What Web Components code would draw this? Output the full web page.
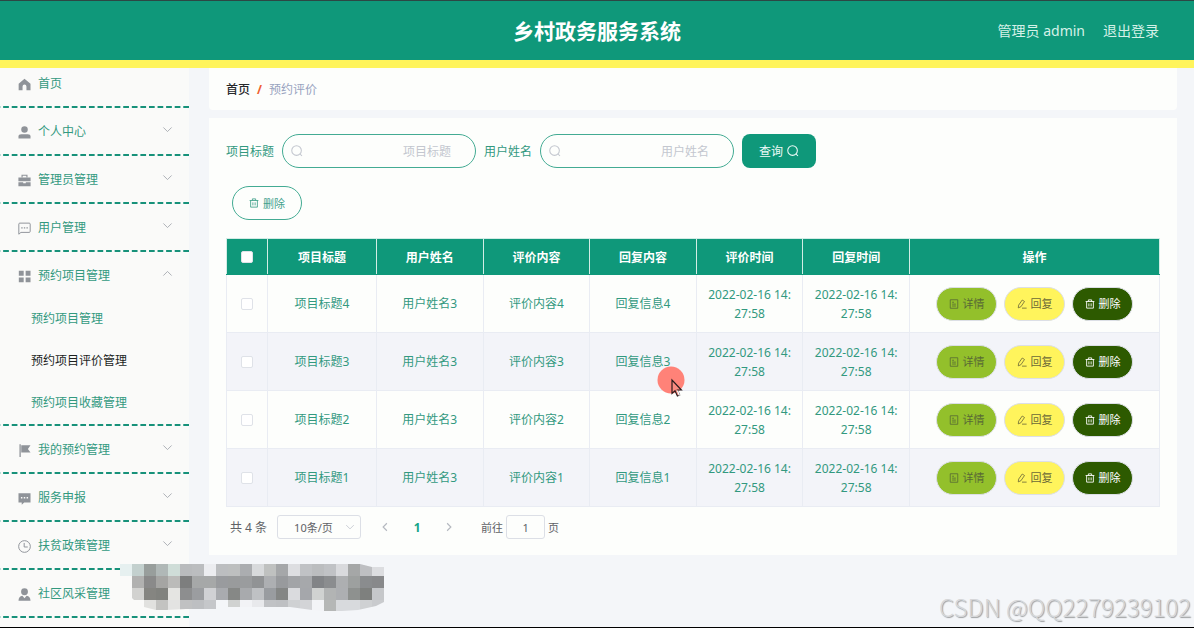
<!DOCTYPE html>
<html lang="zh-CN">
<head>
<meta charset="utf-8">
<meta name="viewport" content="width=device-width, initial-scale=1">
<title>乡村政务服务系统</title>
<style>
  :root {
    --green: #0f987a;
    --green-text: #32997f;
    --green-line: #43ab93;
    --yellow: #fff45c;
    --lime: #93c02b;
    --forest: #2d5a00;
    --card: #fdfefc;
    --line: #e9ecf3;
  }

  html {
    background: #f4f6f9;
  }

  body {
    margin: 0;
    box-sizing: border-box;
    min-height: 100vh;
    display: flex;
    flex-direction: column;
    position: relative;
    overflow: hidden;
    border-top: 1px solid #2c4744;
    border-bottom: 1px solid #000;
    font-family: "Noto Sans", "Noto Sans CJK SC", sans-serif;
    font-size: 12px;
    color: var(--green-text);
  }

  .layout {
    flex: 1;
    display: flex;
  }

  main {
    flex: 1;
    min-width: 0;
    margin: 0 17px 0 20px;
  }
</style>
</head>
<body>
  <app-header user="管理员 admin">乡村政务服务系统</app-header>

  <div class="layout">
    <side-menu>
      <menu-item icon="home" href="#home">首页</menu-item>
      <menu-item icon="user" arrow>个人中心</menu-item>
      <menu-item icon="case" arrow>管理员管理</menu-item>
      <menu-item icon="chat" arrow>用户管理</menu-item>
      <menu-item icon="grid" arrow open>预约项目管理
        <sub-item slot="sub" href="#items">预约项目管理</sub-item>
        <sub-item slot="sub" href="#reviews" active>预约项目评价管理</sub-item>
        <sub-item slot="sub" href="#favorites">预约项目收藏管理</sub-item>
      </menu-item>
      <menu-item icon="flag" arrow>我的预约管理</menu-item>
      <menu-item icon="comment" arrow>服务申报</menu-item>
      <menu-item icon="clock" arrow>扶贫政策管理</menu-item>
      <menu-item icon="custom">社区风采管理</menu-item>
    </side-menu>

    <main>
      <bread-crumb current="预约评价">首页</bread-crumb>
      <content-card>
        <search-form></search-form>
        <review-table></review-table>
        <page-bar total="4" page="1"></page-bar>
      </content-card>
    </main>
  </div>

  <mosaic-patch></mosaic-patch>
  <click-cursor></click-cursor>
  <water-mark>CSDN @QQ2279239102</water-mark>

<script>
const ICONS = {
  home: '<path fill="currentColor" d="M8 1 L15.4 7.2 V15.2 H10.4 V10.4 A2.4 2.4 0 0 0 5.6 10.4 V15.2 H0.8 V7.2 Z"/>',
  user: '<circle cx="8" cy="4.4" r="4" fill="currentColor"/><path fill="currentColor" d="M0.6 15.4 V13 Q0.6 10 4 10 H12 Q15.4 10 15.4 13 V15.4 Z"/>',
  case: '<path fill="none" stroke="currentColor" stroke-width="1.4" d="M5 4.4 V1.6 H11 V4.4"/><path fill="currentColor" d="M0.5 4.2 H15.5 V9 H0.5 Z M0.5 10.2 H6.4 V11.4 H9.6 V10.2 H15.5 V15.2 H0.5 Z"/>',
  chat: '<path fill="none" stroke="currentColor" stroke-width="1.2" stroke-linejoin="round" d="M1 15 V2.6 Q1 1.4 2.2 1.4 H13.8 Q15 1.4 15 2.6 V11.6 Q15 12.8 13.8 12.8 H3.6 Z"/><path fill="currentColor" d="M4 6.4h1.7v1.7H4z M7.2 6.4h1.7v1.7H7.2z M10.4 6.4h1.7v1.7h-1.7z"/>',
  grid: '<path fill="currentColor" d="M1 1h6v6H1z M9.4 1h6v6h-6z M1 9.2h6v6H1z M9.4 9.2h6v6h-6z"/>',
  flag: '<path fill="currentColor" d="M1.8 0.4 H3.4 V16 H1.8 Z M4 1.4 H15.4 L12.2 6 L15.4 10.6 H4 Z"/>',
  comment: '<path fill="currentColor" fill-rule="evenodd" d="M0.6 1.4 H15.4 V12.8 H7.6 L4.6 15.6 V12.8 H0.6 Z M3.6 6.2 V8 H5.4 V6.2 Z M7.1 6.2 V8 H8.9 V6.2 Z M10.6 6.2 V8 H12.4 V6.2 Z"/>',
  clock: '<circle cx="8" cy="8" r="7.2" fill="none" stroke="currentColor" stroke-width="1.2"/><path fill="none" stroke="currentColor" stroke-width="1.2" d="M7.6 3.6 V8.6 H12"/>',
  custom: '<circle cx="8" cy="4.6" r="4.2" fill="currentColor"/><path fill="currentColor" d="M0.6 15.6 Q0.8 9.8 5.4 9.4 L8 12.6 L10.6 9.4 Q15.2 9.8 15.4 15.6 Z"/>',
  down: '<path fill="none" stroke="currentColor" stroke-width="1.3" d="M2 5 L8 11 L14 5"/>',
  up: '<path fill="none" stroke="currentColor" stroke-width="1.3" d="M2 11 L8 5 L14 11"/>',
  left: '<path fill="none" stroke="currentColor" stroke-width="1.8" d="M11 2 L5 8 L11 14"/>',
  right: '<path fill="none" stroke="currentColor" stroke-width="1.8" d="M5 2 L11 8 L5 14"/>',
  search: '<circle cx="7.4" cy="7.4" r="6.4" fill="none" stroke="currentColor" stroke-width="1.4"/><path stroke="currentColor" stroke-width="1.4" d="M12 12 L14.6 14.6"/>',
  trash: '<path fill="none" stroke="currentColor" stroke-width="1.4" d="M1 4 H15 M5.4 4 V1.4 H10.6 V4 M2.6 4 V14.6 H13.4 V4 M6.2 7 V11.8 M9.8 7 V11.8"/>',
  doc: '<path fill="none" stroke="currentColor" stroke-width="1.3" d="M2 1.2 H14 V14.8 H2 Z M5 5.2 H8 M5 8.2 H11 M5 11.2 H11"/>',
  edit: '<path fill="none" stroke="currentColor" stroke-width="1.3" d="M2.6 9.8 L8.4 1.6 L12 4 L6.2 12.4 L2 14.2 Z M8 14.6 H15.4"/>'
};

class BaseElement extends HTMLElement {
  constructor() {
    super();
    this.attachShadow({ mode: 'open' });
  }

  connectedCallback() {
    this.render();
  }

  get styles() {
    return '';
  }

  get template() {
    return '<slot></slot>';
  }

  render() {
    this.shadowRoot.innerHTML = `<style>:host { display: block; } * { box-sizing: border-box; } ${this.styles}</style>${this.template}`;
  }
}

class UiIcon extends BaseElement {
  get styles() {
    return `
      :host { display: inline-block; flex: none; width: 12px; height: 12px; }
      svg { display: block; width: 100%; height: 100%; }
    `;
  }

  get template() {
    return `<svg viewBox="0 0 16 16" aria-hidden="true">${ICONS[this.getAttribute('name')]}</svg>`;
  }
}

class AppHeader extends BaseElement {
  get styles() {
    return `
      header {
        display: grid;
        grid-template-columns: 1fr auto 1fr;
        align-items: center;
        height: 67px;
        padding: 0 35px;
        background: var(--green);
        border-bottom: 8px solid var(--yellow);
        color: #d5f1e8;
      }
      h1 { grid-column: 2; margin: 0; font-size: 21px; line-height: 30px; color: #fff; }
      .account { display: flex; justify-content: flex-end; gap: 18px; font-size: 14px; line-height: 20px; }
      a { color: inherit; text-decoration: none; }
    `;
  }

  get template() {
    return `
      <header>
        <h1><slot></slot></h1>
        <div class="account">
          <span>${this.getAttribute('user')}</span>
          <a href="#logout">退出登录</a>
        </div>
      </header>
    `;
  }
}

class SideMenu extends BaseElement {
  get styles() {
    return `
      :host { flex: none; width: 189px; background: #fafaf9; overflow: hidden; }
      /* the list is scrolled down a little under the header */
      nav { margin-top: -8px; }
    `;
  }

  get template() {
    return '<nav><slot></slot></nav>';
  }
}

class MenuItem extends BaseElement {
  get styles() {
    return `
      :host {
        padding-bottom: 2px;
        background: linear-gradient(to right, transparent 38%, #17917a 38%) right bottom / calc(100% / 22) 2px repeat-x;
      }
      .title {
        display: flex;
        align-items: center;
        gap: 7px;
        width: 100%;
        height: 46px;
        padding: 0 16px 0 18px;
        border: 0;
        background: none;
        font: inherit;
        color: inherit;
        text-align: left;
        text-decoration: none;
        cursor: pointer;
      }
      .icon { width: 13px; height: 13px; color: #8f9399; margin-top: 2px; }
      .arrow { width: 11px; height: 11px; margin: 0 0 4px auto; color: #a5a9af; }
    `;
  }

  get template() {
    const href = this.getAttribute('href');
    const open = this.hasAttribute('open');
    const inner = `
      <ui-icon class="icon" name="${this.getAttribute('icon')}"></ui-icon>
      <span><slot></slot></span>
      ${this.hasAttribute('arrow') ? `<ui-icon class="arrow" name="${open ? 'up' : 'down'}"></ui-icon>` : ''}
    `;
    return `
      ${href ? `<a class="title" href="${href}">${inner}</a>` : `<button class="title" type="button" aria-expanded="${open}">${inner}</button>`}
      <slot name="sub"></slot>
    `;
  }
}

class SubItem extends BaseElement {
  get styles() {
    return `
      a { display: block; padding-left: 31px; line-height: 42px; color: inherit; text-decoration: none; }
      :host([active]) { color: #1c1f1e; }
    `;
  }

  get template() {
    return `<a href="${this.getAttribute('href')}"><slot></slot></a>`;
  }
}

class BreadCrumb extends BaseElement {
  get styles() {
    return `
      nav {
        display: flex;
        align-items: center;
        gap: 7px;
        height: 42px;
        padding: 0 17px;
        border-radius: 0 0 4px 4px;
        background: var(--card);
      }
      a { color: #26292b; font-weight: 500; text-decoration: none; }
      i { color: #f0602f; font-style: normal; font-weight: 700; }
      span { color: #98a3bf; }
    `;
  }

  get template() {
    return `
      <nav>
        <a href="#home"><slot></slot></a>
        <i>/</i>
        <span>${this.getAttribute('current')}</span>
      </nav>
    `;
  }
}

class ContentCard extends BaseElement {
  get styles() {
    return `
      :host { margin-top: 8px; padding: 16px 17px; background: var(--card); }
    `;
  }
}

class PillButton extends BaseElement {
  get styles() {
    return `
      :host { display: inline-block; }
      button {
        display: flex;
        align-items: center;
        justify-content: center;
        gap: 4px;
        width: 100%;
        height: 34px;
        padding: 0 8px;
        border: 1px solid #dcdfe6;
        border-radius: 17px;
        background: none;
        font: inherit;
        font-size: 11px;
        color: #5d604c;
        white-space: nowrap;
        cursor: pointer;
      }
      ui-icon { width: 10px; height: 10px; }
      :host([kind="plain"]) button { padding: 0 16px; border-color: var(--green-line); color: #44a28c; }
      :host([kind="detail"]) button { background: var(--lime); color: #586a35; }
      :host([kind="reply"]) button { background: var(--yellow); color: #6b6838; }
      :host([kind="remove"]) button { background: var(--forest); color: #fff; }
    `;
  }

  get template() {
    return `
      <button type="button"><ui-icon name="${this.getAttribute('icon')}"></ui-icon><slot></slot></button>
    `;
  }
}

class SearchField extends BaseElement {
  get styles() {
    return `
      :host { display: flex; align-items: center; gap: 8px; }
      .box {
        display: flex;
        align-items: center;
        width: 194px;
        height: 34px;
        padding: 0 24px 0 8px;
        border: 1px solid var(--green-line);
        border-radius: 17px;
        color: #c3c7cf;
      }
      input {
        flex: 1;
        min-width: 0;
        border: 0;
        padding: 0;
        outline: 0;
        background: none;
        font: inherit;
        color: var(--green-text);
        text-align: right;
      }
      input::placeholder { color: #c3c7cf; }
    `;
  }

  get template() {
    const label = this.getAttribute('label');
    return `
      <label for="field">${label}</label>
      <div class="box"><ui-icon name="search"></ui-icon><input id="field" type="text" placeholder="${label}"></div>
    `;
  }
}

class SearchForm extends BaseElement {
  get styles() {
    return `
      form { display: flex; align-items: center; gap: 8px; }
      .submit {
        display: flex;
        align-items: center;
        justify-content: center;
        gap: 4px;
        width: 74px;
        height: 34px;
        border: 0;
        border-radius: 8px;
        background: var(--green);
        font: inherit;
        color: #f0fbf8;
        cursor: pointer;
      }
      .tools { display: flex; margin: 18px 6px; }
    `;
  }

  get template() {
    return `
      <form>
        <search-field label="项目标题"></search-field>
        <search-field label="用户姓名"></search-field>
        <button class="submit" type="button">查询<ui-icon name="search"></ui-icon></button>
      </form>
      <div class="tools"><pill-button kind="plain" icon="trash">删除</pill-button></div>
    `;
  }
}

class ReviewTable extends BaseElement {
  rows = [4, 3, 2, 1].map(n => ({
    title: `项目标题${n}`,
    user: '用户姓名3',
    comment: `评价内容${n}`,
    reply: `回复信息${n}`,
    commentTime: '2022-02-16 14:27:58',
    replyTime: '2022-02-16 14:27:58'
  }));

  get styles() {
    return `
      table { width: 100%; border-collapse: collapse; table-layout: fixed; }
      .check { width: 41px; }
      .first { width: 109px; }
      .actions { width: 250px; }
      th {
        height: 36px;
        padding: 0;
        border: 1px solid #d3ece5;
        border-bottom-color: var(--green);
        background: var(--green);
        color: #fff;
        font-weight: 700;
      }
      td {
        height: 58px;
        padding: 9px 10px;
        border: 1px solid var(--line);
        line-height: 19px;
        text-align: center;
        word-break: break-all;
      }
      tbody tr:nth-child(even) td { background: #f3f4f9; }
      td.ops { padding: 0; }
      .ops div { display: flex; justify-content: center; gap: 7px; }
      .ops pill-button { width: 61px; }
      input {
        appearance: none;
        display: block;
        width: 12px;
        height: 12px;
        margin: 0 auto;
        border: 1px solid #dfe2e8;
        border-radius: 2px;
        background: #fff;
      }
    `;
  }

  get template() {
    return `
      <table>
        <colgroup>
          <col class="check"><col class="first"><col><col><col><col><col><col class="actions">
        </colgroup>
        <thead>
          <tr>
            <th><input type="checkbox" aria-label="全选"></th>
            <th>项目标题</th><th>用户姓名</th><th>评价内容</th><th>回复内容</th>
            <th>评价时间</th><th>回复时间</th><th>操作</th>
          </tr>
        </thead>
        <tbody>${this.rows.map(row => this.renderRow(row)).join('')}</tbody>
      </table>
    `;
  }

  renderRow(row) {
    return `
      <tr>
        <td><input type="checkbox" aria-label="${row.title}"></td>
        <td>${row.title}</td>
        <td>${row.user}</td>
        <td>${row.comment}</td>
        <td>${row.reply}</td>
        <td>${row.commentTime}</td>
        <td>${row.replyTime}</td>
        <td class="ops">
          <div>
            <pill-button kind="detail" icon="doc">详情</pill-button>
            <pill-button kind="reply" icon="edit">回复</pill-button>
            <pill-button kind="remove" icon="trash">删除</pill-button>
          </div>
        </td>
      </tr>
    `;
  }
}

class PageBar extends BaseElement {
  get styles() {
    return `
      :host { display: flex; align-items: center; margin-top: 8px; padding-left: 4px; color: #606266; font-size: 12px; }
      .size { position: relative; display: flex; margin: 0 8px 0 10px; }
      select, input {
        height: 24px;
        border: 1px solid #dcdfe6;
        border-radius: 3px;
        background: transparent;
        font: inherit;
        font-size: 11px;
        color: inherit;
      }
      select { appearance: none; width: 84px; padding: 0 16px; }
      .size ui-icon { position: absolute; right: 6px; top: 7px; width: 10px; height: 10px; color: #c0c4cc; pointer-events: none; }
      button {
        display: flex;
        align-items: center;
        justify-content: center;
        width: 32px;
        height: 24px;
        padding: 0;
        border: 0;
        background: none;
        font: inherit;
        color: #b4b8bf;
      }
      button ui-icon { width: 10px; height: 10px; }
      button.current { color: #12a587; font-weight: 700; }
      .jump { display: flex; align-items: center; gap: 3px; margin-left: 16px; font-size: 11px; }
      input { width: 39px; padding: 0; text-align: center; }
    `;
  }

  get template() {
    const page = this.getAttribute('page');
    return `
      <span>共 ${this.getAttribute('total')} 条</span>
      <div class="size">
        <select aria-label="每页条数"><option>10条/页</option></select>
        <ui-icon name="down"></ui-icon>
      </div>
      <button type="button" aria-label="上一页"><ui-icon name="left"></ui-icon></button>
      <button type="button" class="current">${page}</button>
      <button type="button" aria-label="下一页"><ui-icon name="right"></ui-icon></button>
      <div class="jump">
        <label for="page">前往</label><input id="page" type="text" value="${page}"><span>页</span>
      </div>
    `;
  }
}

// Pixelated strip lying over the bottom of the side menu
// each line: first column, then one colour per 12px cell
class MosaicPatch extends BaseElement {
  cells = [
    [0, 'e6f0f0 c3d0ce 989e9c b0b8b7 cfddd8 b9bbbd bbbdbf ecedf0 bcbec0 bdbfbf abadb0 d8dadc bfc1c0 a5a7a9 dddee1 c0c2c5 bbbdbf c0c2c5 d9dadd a5a7a7 bebfc2 dcdde0'],
    [1, 'b1b1b0 8a8a8a a5a5a3 bbbbb9 7d7e7e a6a8a8 a6a8a8 999b9e 999b9c 9a9c9e 919395 adafb2 989a9d a2a4a7 a6a8ab 828487 8b8d8f adafb1 9da09f 8a8c8e 88898b aeb0b3'],
    [1, 'd2d2d0 858581 81827e e5e5e2 8d8e8f 9b9da0 d0d1d4 a9abaf 868886 a8aaad bfc1c4 999ca0 848685 dadbde a5a7ab d0d2d1 b2b4b4 adafb2 8e918f 7e807e c5c7ca'],
    [2, 'e1e1df c3c3c1 e3e3e2 c0c1c2 bdbfc2 c5c7ca f4f6f9 d0d2d1 f2f3f6 e8e9ec c0c2c5 bec0c3 cfd1d3 d3d4d7 f3f4f7 b5b7b6 d8dadd d8dadd cfd1d3 c9cbce']
  ];

  get styles() {
    return `
      :host { position: absolute; left: 120px; top: 563px; pointer-events: none; }
      svg { display: block; }
    `;
  }

  get template() {
    const rects = this.cells.map(([start, line], y) =>
      line.split(' ').map((color, x) =>
        `<rect x="${(start + x) * 12}" y="${y * 12}" width="12" height="12" fill="#${color}"/>`
      ).join('')
    ).join('');
    return `
      <svg width="264" height="48" viewBox="0 0 264 48" shape-rendering="crispEdges" aria-hidden="true">
        <clipPath id="edge">
          <path d="M0 0 H240 L252 3 H264 V38 L256 42 L238 46 L222 47 H204 L192 46 L170 43 H96 V45 H66 L46 46 H36 L20 42 L12 34 V12 H0 Z"/>
        </clipPath>
        <g clip-path="url(#edge)">${rects}</g>
      </svg>
    `;
  }
}

class ClickCursor extends BaseElement {
  get styles() {
    return `
      :host { position: absolute; left: 657px; top: 365px; pointer-events: none; }
      svg { display: block; }
    `;
  }

  get template() {
    return `
      <svg width="28" height="32" viewBox="0 0 28 32" aria-hidden="true">
        <circle cx="14" cy="14" r="13.5" fill="#ff8278"/>
        <path d="M15 14 V27.5 L18 24.8 L20.4 30 L22.6 29 L20.4 24 H24.4 Z" fill="#fb8b81" stroke="#2b1b1b" stroke-width="1.2"/>
        <path d="M20.4 24.4 L22.4 29.4" stroke="#fff" stroke-width="1.4"/>
      </svg>
    `;
  }
}

class WaterMark extends BaseElement {
  get styles() {
    return `
      :host {
        position: absolute;
        right: 3px;
        bottom: 2px;
        font-family: "Noto Sans CJK SC", sans-serif;
        font-size: 24px;
        font-weight: 300;
        line-height: 36px;
        color: #d6d7d9;
        text-shadow: 1px 1px 1px #9b9d9f;
        white-space: nowrap;
        pointer-events: none;
      }
    `;
  }
}

customElements.define('ui-icon', UiIcon);
customElements.define('app-header', AppHeader);
customElements.define('side-menu', SideMenu);
customElements.define('menu-item', MenuItem);
customElements.define('sub-item', SubItem);
customElements.define('bread-crumb', BreadCrumb);
customElements.define('content-card', ContentCard);
customElements.define('pill-button', PillButton);
customElements.define('search-field', SearchField);
customElements.define('search-form', SearchForm);
customElements.define('review-table', ReviewTable);
customElements.define('page-bar', PageBar);
customElements.define('mosaic-patch', MosaicPatch);
customElements.define('click-cursor', ClickCursor);
customElements.define('water-mark', WaterMark);
</script>
</body>
</html>
